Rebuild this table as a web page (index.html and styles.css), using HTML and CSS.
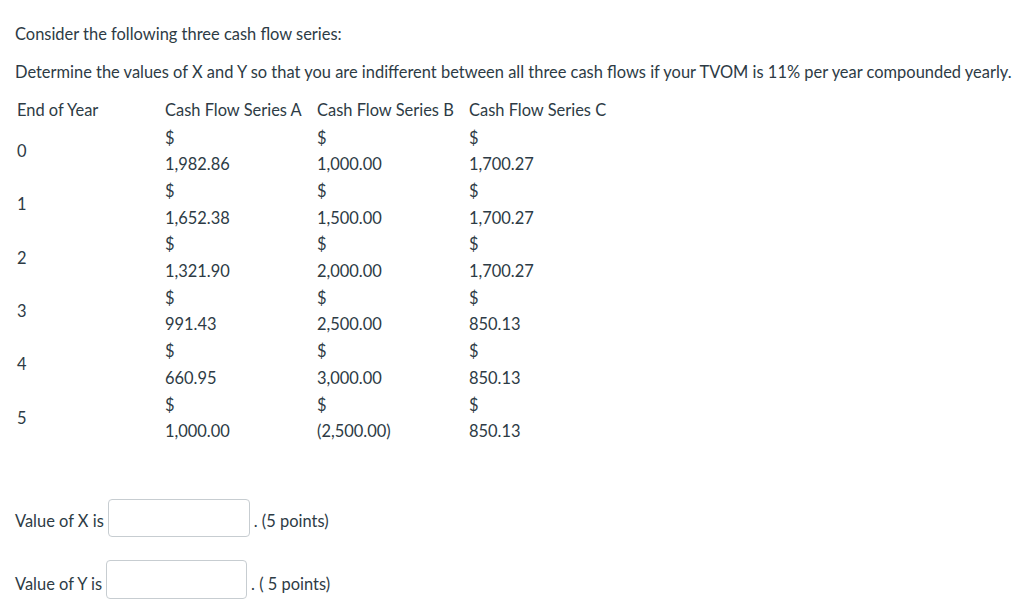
FILE: index.html
```html
<!DOCTYPE html>
<html>
<head>
<meta charset="utf-8">
<link rel="stylesheet" href="styles.css">
</head>
<body>
<div class="page">
  <p class="line first">Consider the following three cash flow series:</p>
  <p class="line">Determine the values of X and Y so that you are indifferent between all three cash flows if your TVOM is 11% per year compounded yearly.</p>
  <table class="cf">
    <thead>
      <tr><th class="yr">End of Year</th><th>Cash Flow Series A</th><th>Cash Flow Series B</th><th>Cash Flow Series C</th></tr>
    </thead>
    <tbody>
      <tr><td class="yr">0</td><td>$<br>1,982.86</td><td>$<br>1,000.00</td><td>$<br>1,700.27</td></tr>
      <tr><td class="yr">1</td><td>$<br>1,652.38</td><td>$<br>1,500.00</td><td>$<br>1,700.27</td></tr>
      <tr><td class="yr">2</td><td>$<br>1,321.90</td><td>$<br>2,000.00</td><td>$<br>1,700.27</td></tr>
      <tr><td class="yr">3</td><td>$<br>991.43</td><td>$<br>2,500.00</td><td>$<br>850.13</td></tr>
      <tr><td class="yr">4</td><td>$<br>660.95</td><td>$<br>3,000.00</td><td>$<br>850.13</td></tr>
      <tr><td class="yr">5</td><td>$<br>1,000.00</td><td>$<br>(2,500.00)</td><td>$<br>850.13</td></tr>
    </tbody>
  </table>
  <div class="answer ax"><span class="lbl">Value of X is</span><input class="box bx" type="text"><span class="lbl">. (5 points)</span></div>
  <div class="answer ay"><span class="lbl">Value of Y is</span><input class="box by" type="text"><span class="lbl lbl2">. ( 5 points)</span></div>
</div>
</body>
</html>
```
FILE: styles.css
```css
html, body {
  margin: 0;
  padding: 0;
  background: #ffffff;
}
body {
  font-family: Lato, "Liberation Sans", sans-serif;
  font-size: 16.45px;
  color: #2d3b45;
}
.page {
  padding: 22px 0 0 15px;
}
.line {
  margin: 0 0 14px 0;
  line-height: 24px;
}
.cf {
  border-collapse: collapse;
  margin-top: -2.5px;
}
.cf th {
  font-weight: normal;
  text-align: left;
  padding: 0;
  line-height: 29px;
  width: 152px;
  vertical-align: middle;
}
.cf th.yr, .cf td.yr {
  width: 148px;
  padding-left: 2px;
}
.cf td {
  padding: 0;
  line-height: 26.7px;
  vertical-align: middle;
}
.answer {
  display: flex;
  align-items: center;
  gap: 4px;
  line-height: 24px;
}
.lbl {
  padding-top: 7px;
}
.ay .lbl {
  padding-top: 9px;
}
.ax {
  margin-top: 54px;
}
.ay {
  margin-top: 23px;
}
.box {
  box-sizing: border-box;
  height: 38px;
  border: 1px solid #c7cdd1;
  border-radius: 4px;
  background: #fff;
  font: inherit;
  padding: 0 6px;
  margin: 0;
}
.bx { width: 142px; }
.by { width: 141px; height: 39px; }
```
